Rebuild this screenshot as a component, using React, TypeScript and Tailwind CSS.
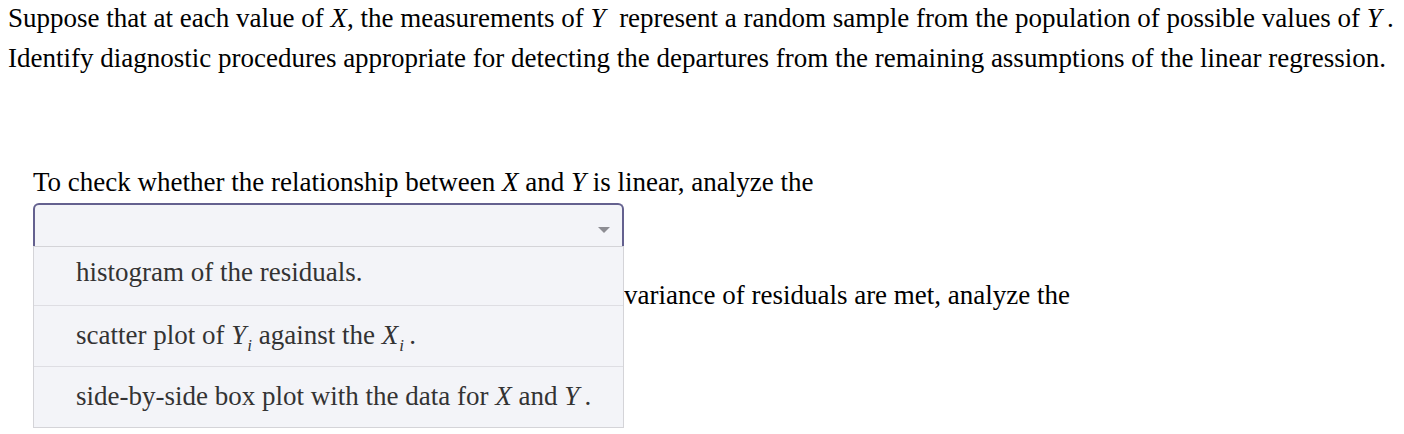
import { useState } from "react";

const serif = { fontFamily: '"Liberation Serif", "Times New Roman", serif' };

function V({ children }: { children: React.ReactNode }) {
    return <span className="italic">{children}</span>;
}

function Sub({ v, s }: { v: string; s: string }) {
    return (
        <span className="italic">
            {v}
            <sub className="text-[17px] align-[-3px] ml-[1px]">{s}</sub>
        </span>
    );
}

const options = [
    { key: "hist", label: <span>histogram of the residuals.</span> },
    {
        key: "scatter",
        label: (
            <span>
                scatter plot of <Sub v="Y" s="i" />&nbsp;against the <Sub v="X" s="i" />&thinsp;.
            </span>
        ),
    },
    {
        key: "box",
        label: (
            <span>
                side-by-side box plot with the data for <V>X</V> and <V>Y</V>&thinsp;.
            </span>
        ),
    },
];

export default function App(): JSX.Element {
    const [open, setOpen] = useState(true);
    const [selected, setSelected] = useState<string>("");

    return (
        <div className="w-[1404px] h-[434px] bg-white text-black overflow-hidden" style={serif}>
            {/* Question */}
            <div className="pl-[8px] text-[27px] leading-[40px] -mt-[2px]">
                <p>
                    Suppose that at each value of <V>X</V>, the measurements of <V>Y</V>&nbsp; represent a random
                    sample from the population of possible values of <V>Y</V>&thinsp;.
                </p>
                <p>
                    Identify diagnostic procedures appropriate for detecting the departures from the remaining
                    assumptions of the linear regression.
                </p>
            </div>

            {/* Part */}
            <div className="pl-[33px] mt-[84px] text-[27px] leading-[40px]">
                <p>
                    To check whether the relationship between <V>X</V> and <V>Y</V> is linear, analyze the
                </p>

                <div className="relative w-[591px] mt-[1px]">
                    <button
                        className="w-full h-[43px] flex items-center justify-end pr-[12px] bg-[#f3f4f8] border-2 border-b-0 border-[#64618f] rounded-t-[6px]"
                        onClick={() => setOpen(!open)}
                    >
                        <svg width="12" height="7" viewBox="0 0 12 7" className="mt-[10px]">
                            <path d="M0 0 L12 0 L6 6 Z" fill="#8d8d93" />
                        </svg>
                    </button>

                    {open && (
                        <ul className="absolute left-0 top-[43px] w-full z-10 bg-[#f3f4f8] border border-[#d4d4d8] text-[#333]">
                            {options.map((opt, i) => (
                                <li
                                    key={opt.key}
                                    className={
                                        "pl-[42px] flex items-center cursor-pointer " +
                                        (i > 0 ? "h-[61px] pb-[2px] border-t border-[#dedee3] " : "h-[58px] pb-[8px] ")
                                    }
                                    onClick={() => {
                                        setSelected(opt.key);
                                        setOpen(false);
                                    }}
                                >
                                    {opt.label}
                                </li>
                            ))}
                        </ul>
                    )}
                </div>

                <p className="mt-[29px] whitespace-nowrap">
                    <span className="inline-block w-[591px] h-[30px] align-bottom border-l-2 border-[#64618f]" />
                    variance of residuals are met, analyze the
                </p>
                {selected && <span className="hidden">{selected}</span>}
            </div>
        </div>
    );
}
